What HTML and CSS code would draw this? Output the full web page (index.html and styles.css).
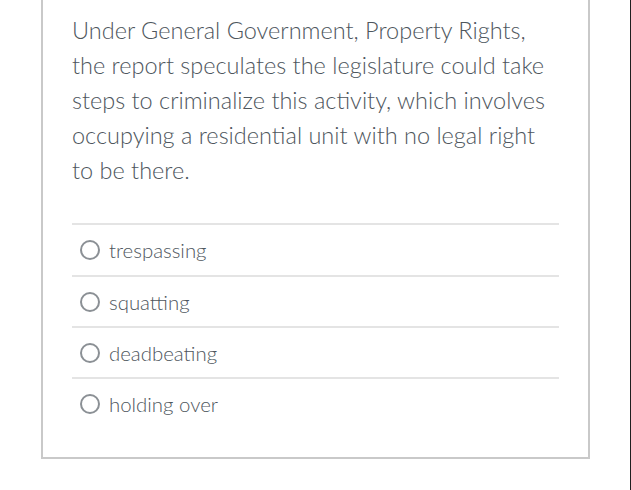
FILE: index.html
```html
<!DOCTYPE html>
<html lang="en">
<head>
<meta charset="utf-8">
<title>Quiz question</title>
<link rel="stylesheet" href="styles.css">
</head>
<body>
<div class="card">
  <p class="question">Under General Government, Property Rights, the report speculates the legislature could take steps to criminalize this activity, which involves occupying a residential unit with no legal right to be there.</p>
  <ul class="answers">
    <li class="answer"><span class="radio"></span><span class="label">trespassing</span></li>
    <li class="answer"><span class="radio"></span><span class="label">squatting</span></li>
    <li class="answer"><span class="radio"></span><span class="label">deadbeating</span></li>
    <li class="answer"><span class="radio"></span><span class="label">holding over</span></li>
  </ul>
</div>
</body>
</html>
```
FILE: styles.css
```css
html, body {
  margin: 0;
  padding: 0;
  background: #ffffff;
}
body {
  width: 631px;
  height: 490px;
  box-sizing: border-box;
  border-right: 1px solid #1f1f1f;
  font-family: Lato, "Noto Sans", sans-serif;
  font-weight: 300;
  color: #4e565d;
}
.card {
  margin-left: 41px;
  width: 549px;
  box-sizing: border-box;
  border: 2px solid #c9c9c9;
  border-top: none;
  padding: 13px 29px 29px 29px;
}
.question {
  margin: 0;
  font-size: 23.5px;
  line-height: 35px;
}
.answers {
  list-style: none;
  margin: 35px 0 0 0;
  padding: 0;
}
.answer {
  display: flex;
  align-items: center;
  gap: 9px;
  height: 52px;
  box-sizing: border-box;
  border-top: 2px solid #e4e4e4;
  padding-left: 8px;
  font-size: 20.4px;
}
.answer + .answer {
  height: 51px;
}
.radio {
  width: 16px;
  height: 16px;
  border: 2px solid #8b9095;
  border-radius: 50%;
  flex: none;
}
.label {
  line-height: 24px;
}
```
